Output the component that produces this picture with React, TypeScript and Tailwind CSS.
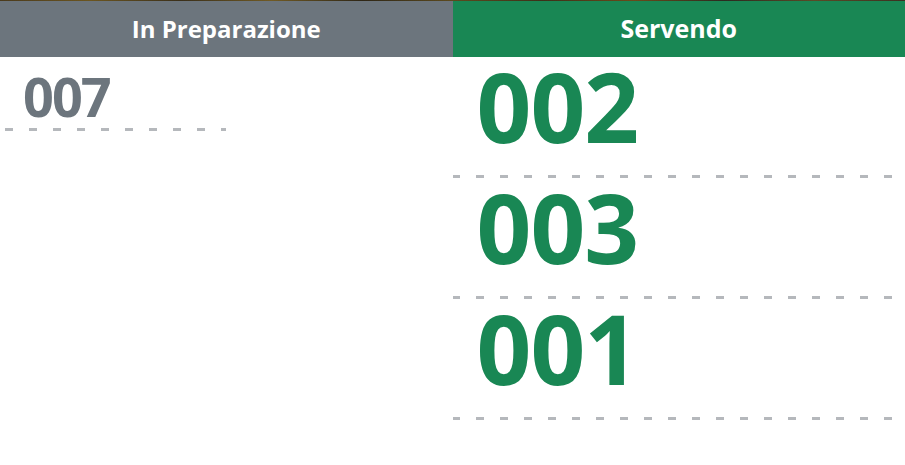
import React from "react";

const dash =
  "h-[3px] bg-[repeating-linear-gradient(to_right,#b5b8bc_0_8px,transparent_8px_24px)]";

export default function App() {
  const serving = ["002", "003", "001"];
  return (
    <div
      className="w-[905px] h-[465px] bg-white overflow-hidden"
      style={{ fontFamily: '"Open Sans", "Noto Sans", sans-serif' }}
    >
      <div className="h-[1px] bg-[linear-gradient(to_right,#4a3a1c,#6b5520_10%,#3a2f1a_20%,#705a24_30%,#2e2616_40%,#5c4a1e_50%,#3c3018_60%,#6a4a1a_70%,#2b2a20_80%,#5a4a26_90%,#3b3020)]" />
      <div className="flex">
        <div className="w-1/2 flex flex-col">
          <div className="h-[56px] bg-[#6c757d] flex items-center justify-center text-white font-bold text-[24px]">
            In Preparazione
          </div>
          <div className="grid grid-cols-2 px-[5px]">
            <div>
              <div className="pt-[12px] pb-[5px] pl-[18px] text-[54px] leading-[54px] font-bold tracking-[-2px] text-[#6c757d]">
                007
              </div>
              <div className={dash} />
            </div>
          </div>
        </div>
        <div className="w-1/2 flex flex-col">
          <div className="h-[56px] bg-[#198754] flex items-center justify-center text-white font-bold text-[25px]">
            Servendo
          </div>
          <div className="flex flex-col pr-[13px]">
            {serving.map((n) => (
              <div key={n}>
                <div className="pt-[1px] pb-[21px] pl-[24px] text-[96px] leading-[96px] font-bold tracking-[-1px] text-[#198754]">
                  {n}
                </div>
                <div className={`${dash} [background-position:-1px_0]`} />
              </div>
            ))}
          </div>
        </div>
      </div>
    </div>
  );
}
